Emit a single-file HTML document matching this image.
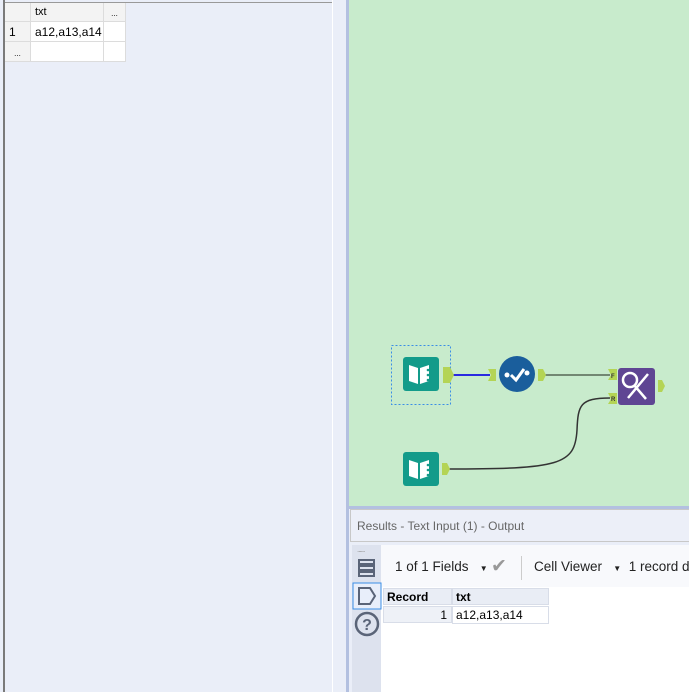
<html><head><style>
body{margin:0;width:689px;height:692px;overflow:hidden;background:#eaeef8;font-family:"Liberation Sans",sans-serif;position:relative}
.a{position:absolute}
.c{position:absolute;border-right:1px solid #dcdcdc;border-bottom:1px solid #dcdcdc;box-sizing:border-box;font-size:12px;padding-left:4px}
</style></head><body>
<div class="a" style="left:3px;top:0;width:2px;height:692px;background:#7a7a7a"></div>
<div class="a" style="left:332px;top:0;width:1px;height:692px;background:#fff"></div>
<div class="a" style="left:5px;top:2px;width:327px;height:1px;background:#999"></div>
<div class="c" style="left:5px;top:3px;width:26px;height:19px;background:#f3f3f3"></div>
<div class="c" style="left:31px;top:3px;width:73px;height:19px;background:#f3f3f3;font-size:11px;line-height:19px">txt</div>
<div class="c" style="left:104px;top:3px;width:22px;height:19px;background:#f3f3f3;font-size:8px;line-height:22px;text-align:center;padding:0">...</div>
<div class="c" style="left:5px;top:22px;width:26px;height:20px;background:#f3f3f3;line-height:20px">1</div>
<div class="c" style="left:31px;top:22px;width:73px;height:20px;background:#fff;line-height:20px">a12,a13,a14</div>
<div class="c" style="left:104px;top:22px;width:22px;height:20px;background:#fff"></div>
<div class="c" style="left:5px;top:42px;width:26px;height:20px;background:#f3f3f3;font-size:8px;line-height:24px;text-align:center;padding:0">...</div>
<div class="c" style="left:31px;top:42px;width:73px;height:20px;background:#fff"></div>
<div class="c" style="left:104px;top:42px;width:22px;height:20px;background:#fff"></div>
<div class="a" style="left:346px;top:0;width:3px;height:692px;background:#b3c0e0"></div>
<div class="a" style="left:349px;top:0;width:340px;height:506px;background:#c8ebcc"></div>
<div class="a" style="left:349px;top:506px;width:340px;height:3px;background:#b3c0e0"></div>
<div class="a" style="left:350px;top:509px;width:339px;height:31px;background:#eceff8;border:1px solid #c8c8c8;border-right:none"></div>
<div class="a" style="left:357px;top:519px;font-size:12px;color:#666">Results - Text Input (1) - Output</div>
<div class="a" style="left:352px;top:545px;width:29px;height:147px;background:#dde2ee"></div>
<div class="a" style="left:381px;top:545px;width:308px;height:147px;background:#fff"></div>
<div class="a" style="left:381px;top:545px;width:308px;height:42px;background:#f8f9fc"></div>
<div class="a" style="left:357px;top:545px;font-size:8px;color:#999;letter-spacing:-1px">......</div>
<svg class="a" style="left:352px;top:555px" width="30" height="85" viewBox="0 0 30 85">
<g fill="none" stroke="#5a6478" stroke-width="2"><rect x="7" y="5" width="15" height="4"/><rect x="7" y="11" width="15" height="4"/><rect x="7" y="17" width="15" height="4"/></g>
<rect x="1" y="28" width="28" height="26" fill="#e8eefa" stroke="#3a8ee6"/>
<path d="M7 33h11l5 8l-5 8h-11z" fill="none" stroke="#5a6478" stroke-width="2"/>
<circle cx="15" cy="69" r="11" fill="none" stroke="#5a6478" stroke-width="2.5"/>
<text x="15" y="75" font-size="16" font-weight="bold" fill="#5a6478" text-anchor="middle" font-family="Liberation Sans">?</text>
</svg>
<div class="a" style="left:395px;top:559px;font-size:13.5px;color:#222">1 of 1 Fields&nbsp;&nbsp;&nbsp;<span style="font-size:8px">▼</span></div>
<div class="a" style="left:491px;top:555px;font-size:19px;color:#999">✔</div>
<div class="a" style="left:521px;top:556px;width:1px;height:24px;background:#ccc"></div>
<div class="a" style="left:534px;top:559px;font-size:13.5px;color:#222;white-space:nowrap">Cell Viewer&nbsp;&nbsp;&nbsp;<span style="font-size:8px">▼</span>&nbsp;&nbsp;1 record disp</div>
<div class="a" style="left:383px;top:588px;height:17px;background:#e9edf5;border:1px solid #d8dde8;font-size:12px;font-weight:bold;line-height:17px;padding-left:3px;box-sizing:border-box;width:69px">Record</div>
<div class="a" style="left:452px;top:588px;width:97px;height:17px;background:#e9edf5;border:1px solid #d8dde8;font-size:12px;font-weight:bold;line-height:17px;padding-left:3px;box-sizing:border-box">txt</div>
<div class="a" style="left:383px;top:606px;width:69px;height:17px;background:#eef1f7;border:1px solid #d8dde8;font-size:12px;line-height:17px;text-align:right;padding-right:4px;box-sizing:border-box">1</div>
<div class="a" style="left:452px;top:606px;width:97px;height:18px;border:1px solid #d8dde8;font-size:12px;line-height:17px;padding-left:3px;box-sizing:border-box">a12,a13,a14</div>
<svg class="a" style="left:349px;top:0" width="340" height="506" viewBox="349 0 340 506">
<rect x="391.5" y="345.5" width="59" height="59" fill="none" stroke="#3a8ee6" stroke-dasharray="2,2"/>
<line x1="452" y1="375" x2="490" y2="375" stroke="#2a2ae0" stroke-width="2"/>
<path d="M545 375H610" stroke="#556655" stroke-width="1.5" fill="none"/>
<path d="M447 469C560 469 575 465 577 430C578 405 580 398 610 398" stroke="#333" stroke-width="1.5" fill="none"/>
<g id="b"><rect x="403" y="357" width="36" height="34" rx="3" fill="#139b8a"/>
<path d="M409 365l9 3v16l-9-3zM429 365l-9 3v16l9-3z" fill="#fff"/>
<circle cx="428" cy="370" r="1.3" fill="#139b8a"/><circle cx="428" cy="375" r="1.3" fill="#139b8a"/><circle cx="428" cy="380" r="1.3" fill="#139b8a"/></g>
<use href="#b" y="95"/>
<path d="M443 367h7l4 8l-4 8h-7z" fill="#b4d455"/>
<path d="M442 463h5l3 6l-3 6h-5z" fill="#b4d455"/>
<path d="M488 369h8v12h-8l3-6z" fill="#b4d455"/>
<circle cx="517" cy="374" r="18" fill="#1a5e9c"/>
<circle cx="507" cy="375" r="2.5" fill="#fff"/><circle cx="527" cy="373" r="2.5" fill="#fff"/>
<path d="M511 375l5 5l8-11" stroke="#fff" stroke-width="3" fill="none"/>
<path d="M538 369h5l3 6l-3 6h-5z" fill="#b4d455"/>
<path d="M608 369h9v11h-9l3-5z" fill="#b4d455"/>
<path d="M608 393h9v11h-9l3-5z" fill="#b4d455"/>
<text x="611" y="378" font-size="6" font-weight="bold" fill="#333">F</text>
<text x="611" y="401" font-size="6" font-weight="bold" fill="#333">R</text>
<rect x="618" y="368" width="37" height="37" rx="3" fill="#5f4593"/>
<circle cx="630" cy="380" r="7" fill="none" stroke="#fff" stroke-width="2.5"/>
<path d="M634 385l12 14M628 398l20-24" stroke="#fff" stroke-width="2.5"/>
<path d="M658 380h4l3 6l-3 6h-4z" fill="#b4d455"/>
</svg>
</body></html>
